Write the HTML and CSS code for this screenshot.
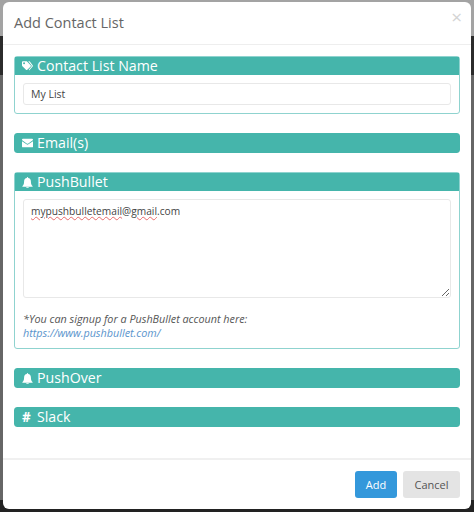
FILE: index.html
```html
<!DOCTYPE html>
<html lang="en">
<head>
    <meta charset="UTF-8">
    <meta name="viewport" content="width=device-width, initial-scale=1.0">
    <title>Add Contact List</title>
    <link rel="stylesheet" href="styles.css">
</head>
<body>
    <div class="modal">
        <div class="modal-header">
            <h4>Add Contact List</h4>
            <span class="close">&times;</span>
        </div>

        <div class="modal-body">
            <div class="panel">
                <div class="panel-title">
                    <svg class="icon" viewBox="0 0 16 14"><path d="M0 1.5C0 .7.7 0 1.500 0H6c.5 0 1 .2 1.400.6l5.200 5.200c.5.5.5 1.400 0 1.900l-4.900 4.900c-.5.5-1.400.5-1.900 0L.6 7.400C.2 7 0 6.500 0 6zM3 4.400a1.400 1.400 0 1 0 0-2.800 1.400 1.400 0 0 0 0 2.800z"/><path d="M9 0h1c.5 0 1 .2 1.400.6l4.100 5.200c.5.5.5 1.400 0 1.900l-4.400 5c-.4.4-1 .5-1.500.2l4.200-5c.5-.6.5-1.500 0-2.100z"/></svg>
                    Contact List Name
                </div>
                <div class="panel-body">
                    <input class="field" type="text" value="My List">
                </div>
            </div>

            <div class="panel closed">
                <div class="panel-title">
                    <svg class="icon" viewBox="0 0 14 11"><path d="M0 1.200C0 .5.500 0 1.200 0h11.600C13.500 0 14 .5 14 1.200c0 .5-.3.9-.7 1.200L7.600 6.300c-.4.2-.8.2-1.200 0L.7 2.400C.3 2.100 0 1.700 0 1.200z"/><path d="M0 3.300l5.800 3.900c.7.500 1.700.500 2.400 0L14 3.300v6.500c0 .7-.5 1.200-1.200 1.200H1.200C.5 11 0 10.500 0 9.800z"/></svg>
                    Email(s)
                </div>
            </div>

            <div class="panel">
                <div class="panel-title">
                    <svg class="icon bell" viewBox="0 0 12 13"><path d="M6 0c.5 0 .8.4.8.800v.5C8.700 1.600 10 3.100 10 5c0 3.500 1 4.700 2 5.700v.8H0v-.8c1-1 2-2.200 2-5.700 0-1.900 1.300-3.400 3.200-3.700v-.5C5.200.4 5.500 0 6 0z"/><path d="M4.500 12h3a1.500 1.300 0 0 1-3 0z"/></svg>
                    PushBullet
                </div>
                <div class="panel-body">
                    <div class="field memo"><span class="misspelt">mypushbulletemail</span>@<span class="misspelt">gmail</span>.com</div>
                    <p class="note">*You can signup for a PushBullet account here:<br><a href="#">https://www.pushbullet.com/</a></p>
                </div>
            </div>

            <div class="panel closed">
                <div class="panel-title">
                    <svg class="icon bell" viewBox="0 0 12 13"><path d="M6 0c.5 0 .8.4.8.800v.5C8.700 1.600 10 3.100 10 5c0 3.500 1 4.700 2 5.700v.8H0v-.8c1-1 2-2.200 2-5.700 0-1.900 1.300-3.400 3.200-3.700v-.5C5.200.4 5.500 0 6 0z"/><path d="M4.500 12h3a1.500 1.300 0 0 1-3 0z"/></svg>
                    PushOver
                </div>
            </div>

            <div class="panel closed">
                <div class="panel-title">
                    <span class="hash">#</span>
                    Slack
                </div>
            </div>
        </div>

        <div class="modal-footer">
            <button class="btn btn-add">Add</button>
            <button class="btn btn-cancel">Cancel</button>
        </div>
    </div>
</body>
</html>
```

FILE: styles.css
```css
* {
    box-sizing: border-box;
}
body {
    margin: 0;
    height: 512px;
    padding: 2px 3px 3px 3px;
    overflow: hidden;
    font-family: "Open Sans", sans-serif;
    background: linear-gradient(180deg, #a3a3a3 0, #a3a3a3 36px, #2b2b2b 36px, #2b2b2b 75px, #666 75px, #666 500px, #222 500px);
}
.modal {
    height: 507px;
    background: #fff;
    border-radius: 6px;
    display: flex;
    flex-direction: column;
}
.modal-header {
    height: 43px;
    padding: 0 11px;
    border-bottom: 1px solid #eee;
    display: flex;
    justify-content: space-between;
    position: relative;
}
.modal-header h4 {
    margin: 0;
    font-size: 14.5px;
    font-weight: 400;
    line-height: 42px;
    color: #666;
}
.close {
    position: absolute;
    top: 3px;
    right: 9px;
    font-size: 19px;
    line-height: 24px;
    color: #d4d4d4;
}
.modal-body {
    flex: 1;
    padding: 11px 11px 0;
}
.panel {
    border: 1px solid #8fd3cf;
    border-radius: 3px;
    margin-bottom: 19px;
}
.panel.closed {
    border-color: #45b5ab;
}
.panel-title {
    height: 18px;
    background: #45b5ab;
    color: #fff;
    font-size: 14.2px;
    line-height: 18px;
    padding-left: 7px;
    display: flex;
    align-items: center;
    gap: 4px;
    white-space: nowrap;
}
.icon {
    width: 11px;
    height: 10px;
    fill: #fff;
}
.bell {
    height: 11px;
}
.hash {
    width: 11px;
    font-size: 13.5px;
    font-weight: 700;
}
.panel-body {
    padding: 8px;
}
.field {
    display: block;
    width: 100%;
    height: 22px;
    border: 1px solid #e8e8e8;
    border-radius: 3px;
    padding: 0 7px;
    font-family: inherit;
    font-size: 10.5px;
    color: #444;
    background: #fff;
}
.memo {
    height: 99px;
    padding-top: 4px;
    font-size: 10.2px;
    line-height: 14px;
    overflow: auto;
    resize: vertical;
}
.misspelt {
    text-decoration: underline wavy #e86a6a 1px;
    text-underline-offset: 1px;
}
.note {
    margin: 14px 0 0;
    font-size: 10.8px;
    line-height: 14px;
    font-style: italic;
    color: #555;
}
.note a {
    color: #5a94cc;
    text-decoration: none;
}
.modal-footer {
    height: 51px;
    border-top: 2px solid #f0f0f0;
    padding: 11px 11px 0;
    display: flex;
    justify-content: flex-end;
    gap: 6px;
}
.btn {
    height: 27px;
    border: none;
    border-radius: 3px;
    font-family: inherit;
    font-size: 11px;
}
.btn-add {
    width: 42px;
    background: #3498db;
    color: #fff;
}
.btn-cancel {
    width: 57px;
    background: #e4e4e4;
    color: #555;
}
```
